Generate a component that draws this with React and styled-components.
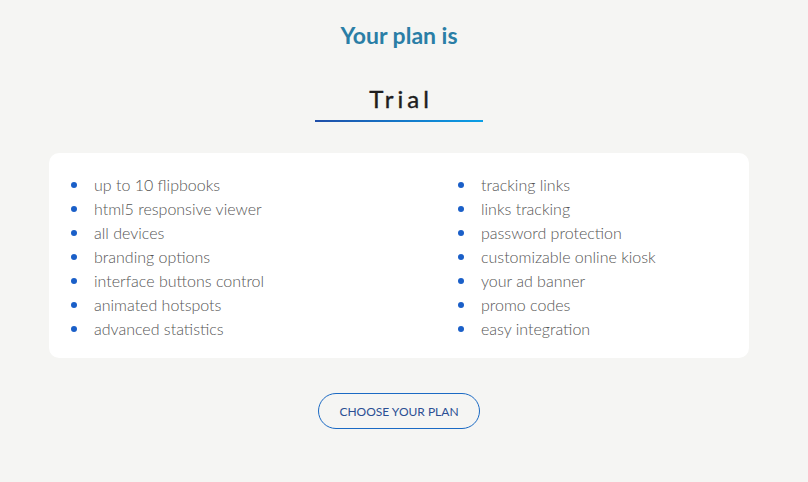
import React from "react";
import styled, { createGlobalStyle } from "styled-components";

const GlobalStyle = createGlobalStyle`
  body {
    margin: 0;
    background: #f5f5f3;
    font-family: Lato, "Open Sans", sans-serif;
  }
`;

const left = [
  "up to 10 flipbooks",
  "html5 responsive viewer",
  "all devices",
  "branding options",
  "interface buttons control",
  "animated hotspots",
  "advanced statistics",
];

const right = [
  "tracking links",
  "links tracking",
  "password protection",
  "customizable online kiosk",
  "your ad banner",
  "promo codes",
  "easy integration",
];

const App = () => {
  return (
    <>
      <GlobalStyle />
      <Page>
        <Title>Your plan is</Title>
        <PlanName>Trial</PlanName>
        <Underline />
        <Card>
          <Features>
            {left.map((item) => (
              <Feature key={item}>{item}</Feature>
            ))}
          </Features>
          <Features>
            {right.map((item) => (
              <Feature key={item}>{item}</Feature>
            ))}
          </Features>
        </Card>
        <ChooseButton>CHOOSE YOUR PLAN</ChooseButton>
      </Page>
    </>
  );
};

// content column is 798px wide (page centre sits at x 399)
const Page = styled.div`
  width: 798px;
  display: flex;
  flex-direction: column;
  align-items: center;
  padding: 20px 49px 54px;
  box-sizing: border-box;
`;
const Title = styled.h1`
  margin: 0;
  font-size: 23px;
  line-height: 30px;
  font-weight: 700;
  color: #2a7ea6;
`;
const PlanName = styled.div`
  margin-top: 34px;
  font-size: 24px;
  line-height: 30px;
  font-weight: 400;
  letter-spacing: 4px;
  padding-left: 4px;
  color: #1e1e1e;
  -webkit-text-stroke: 0.4px #1e1e1e;
`;
const Underline = styled.div`
  margin-top: 6px;
  width: 168px;
  height: 2px;
  background: linear-gradient(to right, #1f4ea8, #0a9fe6);
`;
const Card = styled.div`
  margin-top: 31px;
  width: 100%;
  box-sizing: border-box;
  background: #fff;
  border-radius: 10px;
  padding: 20px 0 17px 45px;
  display: grid;
  grid-template-columns: 387px 1fr;
`;
const Features = styled.ul`
  margin: 0;
  padding: 0;
  list-style: none;
`;
const Feature = styled.li`
  position: relative;
  font-size: 16px;
  line-height: 24px;
  font-weight: 300;
  color: #555;
  &::before {
    content: "";
    position: absolute;
    left: -23px;
    top: 9px;
    width: 6px;
    height: 6px;
    border-radius: 50%;
    background: #1a5fc8;
  }
`;
const ChooseButton = styled.button`
  margin-top: 35px;
  width: 162px;
  height: 36px;
  border: 1px solid #1b6ac4;
  border-radius: 18px;
  background: none;
  font-family: Lato, sans-serif;
  font-size: 12px;
  font-weight: 400;
  color: #2b4f93;
  cursor: pointer;
`;

export default App;
